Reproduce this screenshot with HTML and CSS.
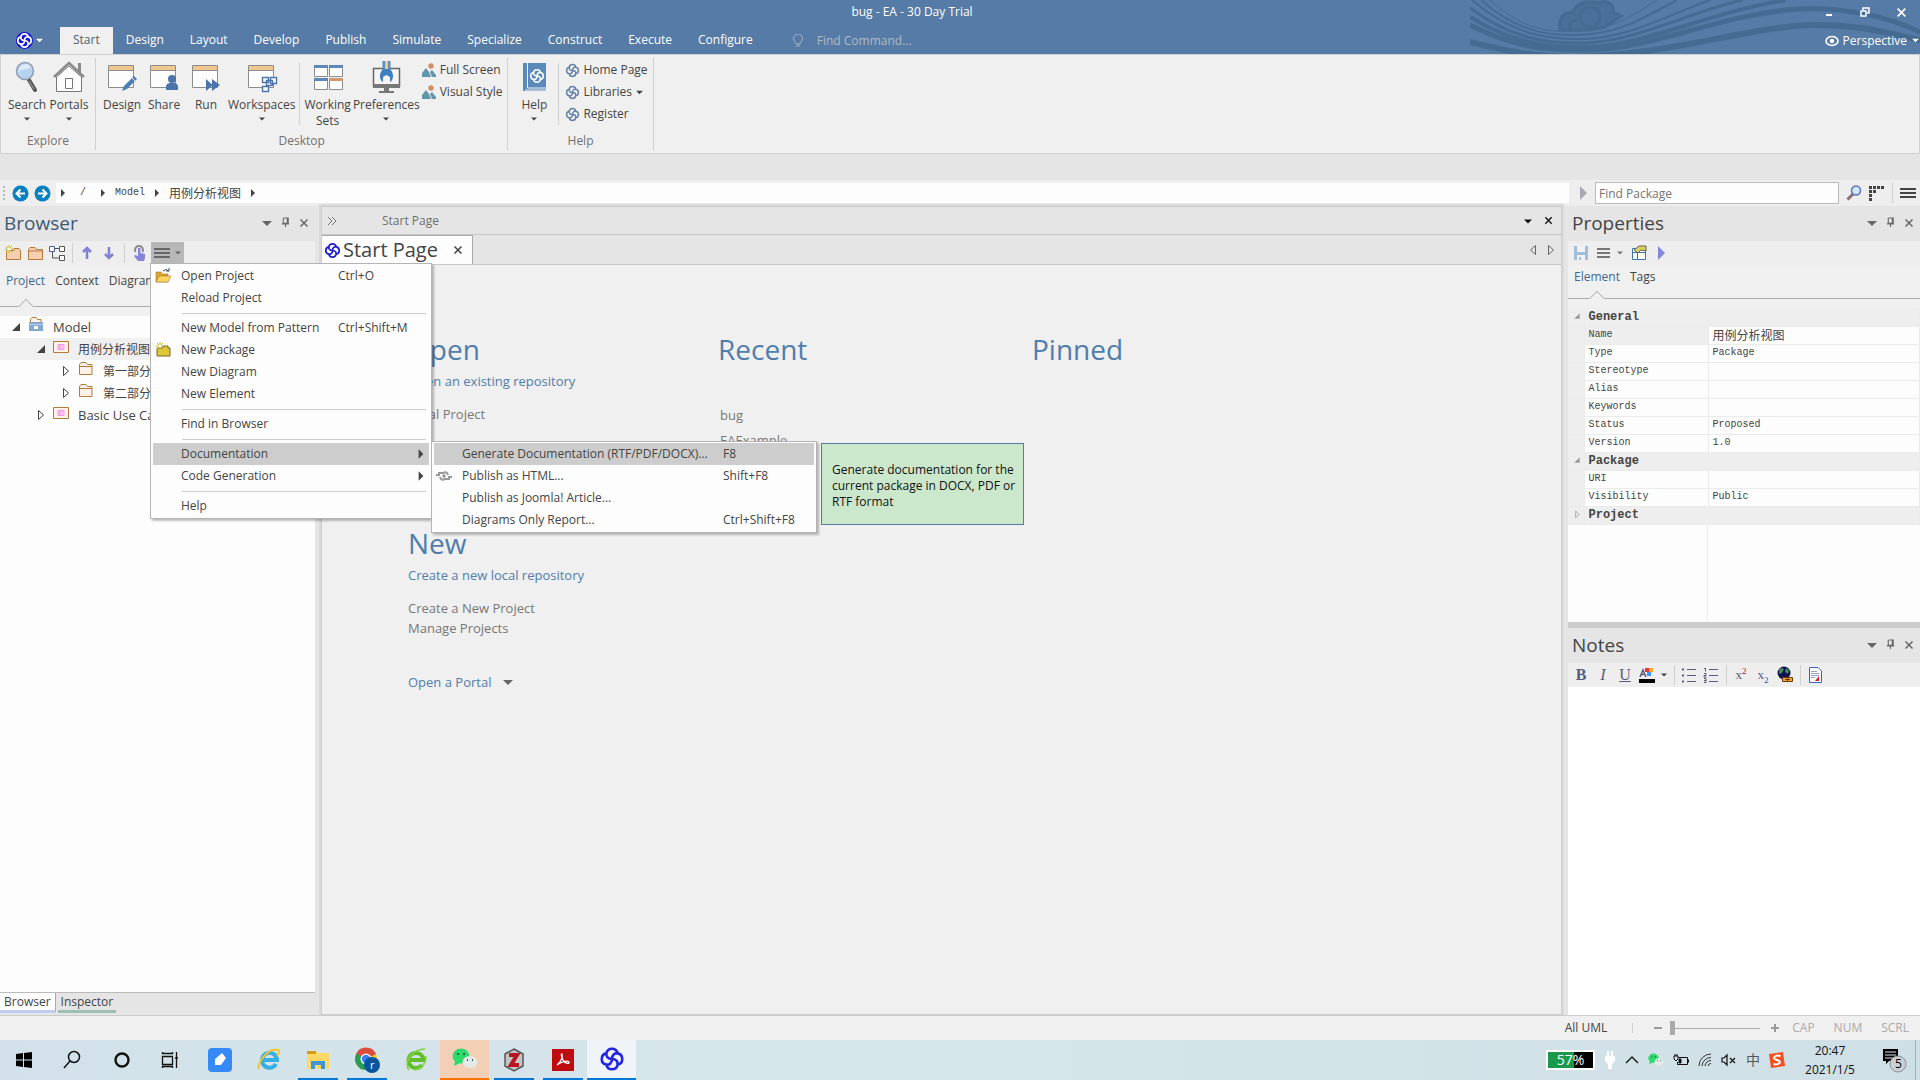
FILE: index.html
```html
<!DOCTYPE html>
<html lang="en">
<head>
  <meta charset="UTF-8">
  <title>bug - EA - 30 Day Trial</title>
  <link rel="stylesheet" href="styles.css">
</head>
<body>
  <!-- shared icons -->
  <svg class="defs" width="0" height="0">
    <symbol id="logo" viewBox="0 0 24 24">
      <path class="logo-bg" d="M6.8 6.8A5.3 5.3 0 0 1 17.2 6.8A5.3 5.3 0 0 1 17.2 17.2A5.3 5.3 0 0 1 6.8 17.2A5.3 5.3 0 0 1 6.8 6.8Z" stroke="currentColor" stroke-width="2.4"/>
      <path d="M12 12C12 8 15 6 17.2 7M12 12C16 12 18 15 17 17.2M12 12C12 16 9 18 6.8 17M12 12C8 12 6 9 7 6.8" fill="none" stroke="currentColor" stroke-width="2.4"/>
    </symbol>
    <symbol id="caret" viewBox="0 0 8 8"><path d="M1 2.500H7L4 5.500Z" fill="currentColor"/></symbol>
    <symbol id="bigcaret" viewBox="0 0 10 10"><path d="M0 3H10L5 8Z" fill="currentColor"/></symbol>
    <symbol id="right" viewBox="0 0 8 10"><path d="M2 1V9L6 5Z" fill="currentColor"/></symbol>
    <symbol id="pin" viewBox="0 0 10 12"><path d="M3 1H8V7H2.500V1M7 1V7M1 7.500H9M5 7.500V11" fill="none" stroke="currentColor" stroke-width="1.200"/></symbol>
    <symbol id="close" viewBox="0 0 10 10"><path d="M1.500 1.500L8.500 8.500M8.500 1.500L1.500 8.500" stroke="currentColor" stroke-width="1.500"/></symbol>
    <symbol id="lines" viewBox="0 0 16 12"><path d="M0 2H16M0 6H16M0 10H16" stroke="currentColor" stroke-width="2"/></symbol>
    <symbol id="window" viewBox="0 0 32 32"><path d="M2.500 4.500H27.500V26.500H2.500Z" fill="#fdfdfd" stroke="#8c8c8c"/><path d="M3 5H27V9H3Z" fill="#f0c78f"/><path d="M2 9.500H28" stroke="#8c8c8c"/></symbol>
    <symbol id="picture" viewBox="0 0 16 16"><circle cx="10" cy="4" r="2.700" fill="#d18d63"/><path d="M1 15V11L5 6L8 10L10 15ZM9 10L11 8L15 13V15H11Z" fill="#6296ab"/></symbol>
    <symbol id="opened" viewBox="0 0 12 12"><path d="M10 2V10H2Z" fill="currentColor"/></symbol>
    <symbol id="closed" viewBox="0 0 12 12"><path d="M3.500 1.500L8.500 6L3.500 10.500Z" fill="none" stroke="currentColor"/></symbol>
    <symbol id="folder" viewBox="0 0 16 16"><path d="M1.500 13.500V3.500L3 1.500H8L9.500 3.500H14V13.500ZM1.500 5.500H14" fill="#fdf1e8" stroke="#b5793c"/></symbol>
    <symbol id="view" viewBox="0 0 16 16"><path d="M.5 2.500H15.500V13.500H.5Z" fill="#fdf1e8" stroke="#b5793c"/><path d="M5 5.500H11V10.500H5ZM7 6V10" fill="#f9c6ec" stroke="#f29ae6"/></symbol>
    <symbol id="wechat" viewBox="0 0 26 22"><ellipse cx="9" cy="8" rx="8.500" ry="7.500" fill="#2ddb6c"/><path d="M3 13L2 18L8 15Z" fill="#2ddb6c"/><ellipse cx="18" cy="14" rx="7.500" ry="6" fill="#e4e8e6"/><path d="M20 18L23 21L23 17Z" fill="#e4e8e6"/><path d="M5 6H7M11 6H13M15 12H16M20 12H21" stroke="#236b43" stroke-width="2"/></symbol>
  </svg>

  <header class="titlebar">
    <svg class="waves" width="450" height="54" viewBox="0 0 450 54" fill="none" stroke="#456b92">
      <path d="M20 0C50 28 75 32 102 31C145 30 165 14 187 0" stroke-width="1"/>
      <path d="M11 0C45 30 75 36 108 35C152 34 180 14 207 0" stroke-width="2"/>
      <path d="M2 0C40 33 75 40 112 39C160 38 200 14 240 0" stroke-width="2"/>
      <path d="M0 8C40 38 75 44 116 43C166 41 220 12 272 0" stroke-width="3"/>
      <path d="M0 17C40 42 75 48 118 47C176 45 240 12 316 0" stroke-width="4"/>
      <path d="M0 25C40 46 75 51 120 50C186 48 250 14 330 9C380 7 420 18 450 32" stroke-width="5"/>
      <path d="M0 42C40 52 60 56 100 57C200 56 270 28 340 25C390 24 420 34 450 40" stroke-width="6"/>
      <path d="M90 30C88 18 94 11 103 13C105 3 117 0 128 3C140 -2 145 8 143 12L151 16L135 27L119 30Z" fill="#4a6f98" stroke-width="3"/>
      <circle cx="120" cy="17" r="10" stroke-width="3"/><path d="M100 30C99 22 103 20 107 21" stroke-width="3"/>
    </svg>
    <div class="title-row">
      <span class="title-side"></span>
      <h1>bug - EA - 30 Day Trial</h1>
      <div class="title-side window-btns">
        <button aria-label="Minimize"><svg width="10" height="10"><path d="M2 8H8" stroke="#fff" stroke-width="2"/></svg></button>
        <button aria-label="Restore"><svg width="10" height="10" fill="none" stroke="#fff" stroke-width="1.500"><path d="M1 4H6V9H1ZM3 3V1H9V6H7"/></svg></button>
        <button aria-label="Close"><svg width="11" height="11"><use href="#close"/></svg></button>
      </div>
    </div>
    <nav class="ribbon-tabs">
      <button class="app-menu" aria-label="Application menu"><svg class="logo-round" width="17" height="17"><use href="#logo"/></svg><svg width="9" height="9"><use href="#caret"/></svg></button>
      <button class="tab active">Start</button>
      <button class="tab">Design</button>
      <button class="tab">Layout</button>
      <button class="tab">Develop</button>
      <button class="tab">Publish</button>
      <button class="tab">Simulate</button>
      <button class="tab">Specialize</button>
      <button class="tab">Construct</button>
      <button class="tab">Execute</button>
      <button class="tab">Configure</button>
      <label class="find-command">
        <svg width="12" height="14" fill="none" stroke="#a9b6c4"><path d="M4 10C4 8 1.500 7 1.500 4.500A4 4 0 0 1 10.500 4.500C10.500 7 8 8 8 10ZM4 12H8"/></svg>
        <input type="text" placeholder="Find Command..." aria-label="Find Command">
      </label>
      <button class="perspective"><svg width="14" height="12"><ellipse cx="7" cy="6" rx="6" ry="4.500" fill="none" stroke="#fff" stroke-width="1.600"/><circle cx="7" cy="6" r="2.200" fill="#fff"/></svg>Perspective<svg width="9" height="9"><use href="#caret"/></svg></button>
    </nav>
  </header>

  <section class="ribbon">
    <div class="group">
      <div class="group-items">
        <button class="big">
          <svg width="32" height="32"><path d="M18 19L24 29" stroke="#555" stroke-width="4" stroke-linecap="round"/><path d="M18 20L23 28" stroke="#aaa" stroke-width="1"/><circle cx="14" cy="10" r="8.500" fill="#b5d2f0" stroke="#8d9cad" stroke-width="1.500"/><path d="M7 12C10 6 14 11 20 6C17 1 8 2 7 12Z" fill="#dcebfa"/></svg>
          Search<svg width="8" height="8"><use href="#caret"/></svg>
        </button>
        <button class="big">
          <svg width="32" height="32"><path d="M3.500 16L16 5L28.500 16V30.500H3.500Z" fill="#fdfdfd" stroke="#777"/><path d="M26.500 2V12" stroke="#8a8a8a" stroke-width="3"/><path d="M1 16L16 2L31 16" fill="none" stroke="#8a8a8a" stroke-width="2.500"/><path d="M12.500 17.500H19.500V27.500H12.500Z" fill="#fff" stroke="#777"/></svg>
          Portals<svg width="8" height="8"><use href="#caret"/></svg>
        </button>
      </div>
      <div class="group-name">Explore</div>
    </div>
    <div class="group">
      <div class="group-items">
        <button class="big"><svg width="32" height="32"><use href="#window"/><path d="M16 30L18 25L28 15L31 18L21 28Z" fill="#4c7db8"/><path d="M26 17L29 20" stroke="#f0f0f0"/></svg>Design</button>
        <button class="big"><svg width="32" height="32"><use href="#window"/><circle cx="24" cy="18" r="4" fill="#4b74ab"/><path d="M18 29V25Q19 22 22 22H26Q29 22 30 25V29Z" fill="#4b74ab"/></svg>Share</button>
        <button class="big"><svg width="32" height="32"><use href="#window"/><path d="M16 18L22 23.500V18L30 24L22 30V25L16 30Z" fill="#4b74ab"/></svg>Run</button>
        <button class="big"><svg width="32" height="32"><use href="#window"/><path d="M16.500 16.500H22.500V21.500H16.500ZM24.500 16.500H30.500V22.500H24.500ZM16.500 25.500H22.500V30.500H16.500ZM20.500 19.500H26.500V24.500H20.500Z" fill="#fff" stroke="#4b74ab" stroke-width="1.400"/></svg>Workspaces<svg width="8" height="8"><use href="#caret"/></svg></button>
        <span class="rule"></span>
        <button class="big"><svg width="32" height="32"><path d="M2.500 5.500H15.500V15.500H2.500ZM17.500 5.500H30.500V15.500H17.500ZM2.500 18.500H15.500V28.500H2.500ZM17.500 18.500H30.500V28.500H17.500Z" fill="#fdfdfd" stroke="#8c8c8c"/><path d="M2 5.500H16M17 5.500H31M2 18.500H16" stroke="#5b88b9" stroke-width="3"/><path d="M17 18.500H31" stroke="#d1966a" stroke-width="3"/></svg>Working<br>Sets</button>
        <button class="big"><svg width="32" height="32"><path d="M3.500 7.500H29.500V25H3.500Z" fill="#f5f5f5" stroke="#666" stroke-width="1.500"/><path d="M3 23H30V27H3ZM14 27H19V30H24V32H9V30H14Z" fill="#777"/><path d="M12.500 0H20.500V9H12.500Z" fill="#5e8dc0"/><path d="M15 0H18V11H15Z" fill="#f0c78f"/><path d="M13 8H20C25 13 23 20 20 21V16L16.500 14L13 16V21C10 20 8 13 13 8Z" fill="#3f7fc0"/></svg>Preferences<svg width="8" height="8"><use href="#caret"/></svg></button>
        <div class="small-list">
          <button><svg width="16" height="16"><use href="#picture"/></svg>Full Screen</button>
          <button><svg width="16" height="16"><use href="#picture"/></svg>Visual Style</button>
        </div>
      </div>
      <div class="group-name">Desktop</div>
    </div>
    <div class="group">
      <div class="group-items">
        <button class="big"><svg class="help-book" width="32" height="32"><path d="M5 2H28V30H5Z" fill="#5b8aba"/><path d="M9.500 2V27H28M7 29H28" stroke="#f0f0f0" fill="none"/><use href="#logo" x="11" y="7" width="16" height="16"/></svg>Help<svg width="8" height="8"><use href="#caret"/></svg></button>
        <span class="rule"></span>
        <div class="small-list ea">
          <button><svg width="15" height="15"><use href="#logo"/></svg>Home Page</button>
          <button><svg width="15" height="15"><use href="#logo"/></svg>Libraries<svg width="9" height="9"><use href="#caret"/></svg></button>
          <button><svg width="15" height="15"><use href="#logo"/></svg>Register</button>
        </div>
      </div>
      <div class="group-name">Help</div>
    </div>
  </section>

  <div class="navbar">
    <svg width="4" height="16" fill="#bbb"><path d="M0 1H2V3H0ZM0 5H2V7H0ZM0 9H2V11H0ZM0 13H2V15H0Z"/></svg>
    <button aria-label="Back"><svg width="17" height="17"><circle cx="8.500" cy="8.500" r="8" fill="#0a80c0"/><path d="M13 8.500H5M8.500 4.500L4.500 8.500L8.500 12.500" fill="none" stroke="#fff" stroke-width="2"/></svg></button>
    <button aria-label="Forward"><svg width="17" height="17"><circle cx="8.500" cy="8.500" r="8" fill="#0a80c0"/><path d="M4 8.500H12M8.500 4.500L12.500 8.500L8.500 12.500" fill="none" stroke="#fff" stroke-width="2"/></svg></button>
    <nav class="crumbs">
      <svg width="8" height="10"><use href="#right"/></svg>
      <a href="#" class="root">/</a>
      <svg width="8" height="10"><use href="#right"/></svg>
      <a href="#">Model</a>
      <svg width="8" height="10"><use href="#right"/></svg>
      <a href="#" class="cjk">用例分析视图</a>
      <svg width="8" height="10"><use href="#right"/></svg>
    </nav>
    <div class="find">
      <svg width="8" height="14"><path d="M0 0L7 7L0 14Z" fill="#a9a9b3"/></svg>
      <input type="text" placeholder="Find Package" aria-label="Find Package">
      <button aria-label="Search"><svg width="16" height="16"><path d="M1.500 14.500L7 9" stroke="#8b6f77" stroke-width="3"/><circle cx="10" cy="5.500" r="4.500" fill="#cfe6fb" stroke="#5b6fc0" stroke-width="1.500"/></svg></button>
      <button aria-label="Layout"><svg width="16" height="16" fill="#444"><path d="M0 1h3v3H0zM4 1h3v3H4zM8 1h3v3H8zM12 1h3v3h-3zM0 5h3v3H0zM4 5h3v3H4zM0 9h3v3H0zM0 13h3v3H0z"/></svg></button>
      <span class="rule"></span>
      <button aria-label="Menu"><svg width="16" height="12"><use href="#lines"/></svg></button>
    </div>
  </div>

  <main class="workspace">
    <aside class="panel browser">
      <div class="panel-title">
        <h2>Browser</h2>
        <button aria-label="Menu"><svg width="10" height="10"><use href="#bigcaret"/></svg></button>
        <button aria-label="Pin"><svg width="9" height="11"><use href="#pin"/></svg></button>
        <button aria-label="Close"><svg width="10" height="10"><use href="#close"/></svg></button>
      </div>
      <div class="toolbar">
        <button class="tool" aria-label="New model"><svg width="16" height="16"><path d="M1.500 14.500V5.500H9V3.500H14L15.500 5.500V14.500Z" fill="#f6cfae" stroke="#b5793c"/><path d="M4 0V8M0 4H8M1 1L7 7M7 1L1 7" stroke="#cdb71a"/><circle cx="4" cy="4" r="1.500" fill="#fff"/></svg></button>
        <button class="tool" aria-label="New package"><svg width="16" height="16"><path d="M1.500 14.500V4.500L3 2.500H8L9.500 4.500H15.500V14.500ZM1.500 6H15" fill="#f6cfae" stroke="#b5793c"/></svg></button>
        <button class="tool" aria-label="New diagram"><svg width="16" height="16" fill="#fff" stroke="#555"><path d="M3.500 5V13H10M5 3.500H10" fill="none"/><path d="M.5 1.500H5.500V6.500H.5Z" stroke="#4c5fa8"/><path d="M10.500 1.500H15.500V6.500H10.500ZM10.500 10.500H15.500V15.500H10.500Z"/></svg></button>
        <span class="rule"></span>
        <button class="tool" aria-label="Move up"><svg width="16" height="16"><path d="M8 14V4M4 7L8 3L12 7" fill="none" stroke="#8080d8" stroke-width="2.500"/></svg></button>
        <button class="tool" aria-label="Move down"><svg width="16" height="16"><path d="M8 2V12M4 9L8 13L12 9" fill="none" stroke="#8080d8" stroke-width="2.500"/></svg></button>
        <span class="rule"></span>
        <button class="tool" aria-label="Locate"><svg width="16" height="16"><path d="M4.500 7A4 4 0 1 1 11.500 7" fill="none" stroke="#888" stroke-width="2"/><path d="M7 3H9.500V8L14 9V13L13 16H7L3 11L4 10L7 11Z" fill="#8585dc"/></svg></button>
        <div class="menu-anchor">
          <button class="menu-btn" aria-label="Browser menu"><svg width="16" height="12"><use href="#lines"/></svg><svg width="8" height="8"><use href="#caret"/></svg></button>
          <ul class="menu main-menu">
            <li><button><svg width="16" height="16"><path d="M1 14V4H6L7 6H13V14Z" fill="#e0a530" stroke="#8a6a20" stroke-width=".5"/><path d="M1 14L4 8H16L13 14Z" fill="#ffd45e" stroke="#8a6a20" stroke-width=".5"/><path d="M8 3Q11 0 14 3M14 0V3H11" fill="none" stroke="#456"/></svg><span>Open Project</span><kbd>Ctrl+O</kbd></button></li>
            <li><button><span>Reload Project</span></button></li>
            <li class="sep"></li>
            <li><button><span>New Model from Pattern</span><kbd>Ctrl+Shift+M</kbd></button></li>
            <li><button><svg width="16" height="16"><path d="M2 14V6H8V4H13V6H15V14Z" fill="#e0c63a" stroke="#776a22"/><path d="M5 0V8M1 4H9M2 1L8 7M8 1L2 7" stroke="#c9b21a"/><circle cx="5" cy="4" r="1.500" fill="#fff"/></svg><span>New Package</span></button></li>
            <li><button><span>New Diagram</span></button></li>
            <li><button><span>New Element</span></button></li>
            <li class="sep"></li>
            <li><button><span>Find in Browser</span></button></li>
            <li class="sep"></li>
            <li class="has-sub">
              <button class="hot"><span>Documentation</span><svg class="more" width="10" height="12"><use href="#right"/></svg></button>
              <ul class="menu sub-menu">
                <li><button class="hot"><span>Generate Documentation (RTF/PDF/DOCX)...</span><kbd>F8</kbd></button></li>
                <li><button><svg width="16" height="16" fill="none" stroke="#999" stroke-width="2"><path d="M2 5H7Q11 3 12 7M14 11H9Q5 13 4 9M0 7H4M12 9H16"/><circle cx="8" cy="8" r="1.800" fill="#999" stroke="none"/></svg><span>Publish as HTML...</span><kbd>Shift+F8</kbd></button></li>
                <li><button><span>Publish as Joomla! Article...</span></button></li>
                <li><button><span>Diagrams Only Report...</span><kbd>Ctrl+Shift+F8</kbd></button></li>
              </ul>
              <div class="tooltip">Generate documentation for the current package in DOCX, PDF or RTF format</div>
            </li>
            <li><button><span>Code Generation</span><svg class="more" width="10" height="12"><use href="#right"/></svg></button></li>
            <li class="sep"></li>
            <li><button><span>Help</span></button></li>
          </ul>
        </div>
      </div>
      <nav class="panel-tabs tall">
        <button class="on">Project</button><button>Context</button><button>Diagram</button>
      </nav>
      <ul class="tree">
        <li class="l0"><svg width="12" height="12"><use href="#opened"/></svg><svg width="16" height="16"><path d="M2.500 5V2.500L4 .5H8L9.500 2.500H13V5" fill="#fdf1e8" stroke="#b5793c"/><path d="M1 5H15V14H1Z" fill="#84a9d1"/><path d="M1 7.500H15" stroke="#b9d0e8"/><path d="M6 9H10V12H6Z" fill="#fff"/></svg>Model</li>
        <li class="l1 selected"><svg width="12" height="12"><use href="#opened"/></svg><svg width="16" height="16"><use href="#view"/></svg><span class="cjk">用例分析视图</span></li>
        <li class="l2"><svg width="12" height="12"><use href="#closed"/></svg><svg width="16" height="16"><use href="#folder"/></svg><span class="cjk">第一部分</span></li>
        <li class="l2"><svg width="12" height="12"><use href="#closed"/></svg><svg width="16" height="16"><use href="#folder"/></svg><span class="cjk">第二部分</span></li>
        <li class="l1"><svg width="12" height="12"><use href="#closed"/></svg><svg width="16" height="16"><use href="#view"/></svg>Basic Use Case</li>
      </ul>
      <div class="dock-tabs">
        <button class="on">Browser</button><button>Inspector</button>
      </div>
    </aside>

    <section class="center">
      <div class="strip caption">
        <svg width="10" height="12" fill="none" stroke="#777"><path d="M1 2L5 6L1 10M5 2L9 6L5 10"/></svg>
        <span>Start Page</span>
        <button aria-label="Tab list"><svg width="8" height="8"><use href="#bigcaret"/></svg></button>
        <button aria-label="Close"><svg width="9" height="9"><use href="#close"/></svg></button>
      </div>
      <div class="strip doc-tabs">
        <button class="doc-tab"><svg width="17" height="17"><use href="#logo"/></svg>Start Page<svg class="x" width="10" height="10"><use href="#close"/></svg></button>
        <button class="arrow" aria-label="Previous"><svg width="8" height="12"><path d="M6.500 1.500L1.500 6L6.500 10.500Z" fill="none" stroke="#666"/></svg></button>
        <button class="arrow" aria-label="Next"><svg width="8" height="12"><path d="M1.500 1.500L6.500 6L1.500 10.500Z" fill="none" stroke="#666"/></svg></button>
      </div>
      <div class="start">
        <div class="col">
          <h2>Open</h2>
          <a class="lead" href="#">Open an existing repository</a>
          <a href="#">Local Project</a>
          <h2 class="new">New</h2>
          <a class="lead" href="#">Create a new local repository</a>
          <a href="#">Create a New Project</a>
          <a href="#">Manage Projects</a>
          <button class="portal">Open a Portal<svg width="10" height="10"><use href="#bigcaret"/></svg></button>
        </div>
        <div class="col recent">
          <h2>Recent</h2>
          <a href="#">bug</a>
          <a href="#">EAExample</a>
        </div>
        <div class="col">
          <h2>Pinned</h2>
        </div>
      </div>
    </section>

    <aside class="side">
      <section class="panel properties">
        <div class="panel-title">
          <h2>Properties</h2>
          <button aria-label="Menu"><svg width="10" height="10"><use href="#bigcaret"/></svg></button>
          <button aria-label="Pin"><svg width="9" height="11"><use href="#pin"/></svg></button>
          <button aria-label="Close"><svg width="10" height="10"><use href="#close"/></svg></button>
        </div>
        <div class="toolbar">
          <button class="tool" aria-label="Save"><svg width="16" height="16"><path d="M1 1H15V15H1Z" fill="#a3bdd9"/><path d="M4 1H12V7H4ZM4 10H12V15H4Z" fill="#f0f2f5"/><path d="M7 12V15" stroke="#a3bdd9" stroke-width="2"/></svg></button>
          <button class="tool wide" aria-label="Options"><svg width="13" height="12"><path d="M0 2H13M0 6H13M0 10H13" stroke="#777" stroke-width="2"/></svg><svg width="8" height="8"><use href="#caret"/></svg></button>
          <button class="tool" aria-label="Properties"><svg width="16" height="16"><path d="M1.500 3.500H14.500V14.500H1.500ZM1.500 7.500H14.500M6.500 4V14" fill="#fff" stroke="#3f74ab"/><path d="M3 5L8 1H15V6L10 5L7 8Z" fill="#d9cf66" stroke="#665"/></svg></button>
          <button class="tool" aria-label="Run"><svg width="16" height="16"><path d="M5 1L12 8L5 15Z" fill="#8585dc"/></svg></button>
        </div>
        <nav class="panel-tabs">
          <button class="on">Element</button><button>Tags</button>
        </nav>
        <table class="grid">
          <colgroup><col class="gutter"><col class="name"><col></colgroup>
          <tr class="head"><td><svg width="8" height="8"><use href="#opened"/></svg></td><th colspan="2">General</th></tr>
          <tr class="current"><td></td><th>Name</th><td class="cjk">用例分析视图</td></tr>
          <tr><td></td><th>Type</th><td>Package</td></tr>
          <tr><td></td><th>Stereotype</th><td></td></tr>
          <tr><td></td><th>Alias</th><td></td></tr>
          <tr><td></td><th>Keywords</th><td></td></tr>
          <tr><td></td><th>Status</th><td>Proposed</td></tr>
          <tr><td></td><th>Version</th><td>1.0</td></tr>
          <tr class="head"><td><svg width="8" height="8"><use href="#opened"/></svg></td><th colspan="2">Package</th></tr>
          <tr><td></td><th>URI</th><td></td></tr>
          <tr><td></td><th>Visibility</th><td>Public</td></tr>
          <tr class="head"><td><svg width="9" height="9"><use href="#closed"/></svg></td><th colspan="2">Project</th></tr>
        </table>
        <div class="grid-rest"><span></span></div>
      </section>
      <section class="panel notes">
        <div class="panel-title">
          <h2>Notes</h2>
          <button aria-label="Menu"><svg width="10" height="10"><use href="#bigcaret"/></svg></button>
          <button aria-label="Pin"><svg width="9" height="11"><use href="#pin"/></svg></button>
          <button aria-label="Close"><svg width="10" height="10"><use href="#close"/></svg></button>
        </div>
        <div class="toolbar">
          <button class="tool letter"><b>B</b></button>
          <button class="tool letter"><i>I</i></button>
          <button class="tool letter"><u>U</u></button>
          <button class="tool" aria-label="Text colour"><svg width="16" height="16"><path d="M1 10L4 3L7 10M2.500 7.500H5.500" fill="none" stroke="#5a5a80" stroke-width="1.500"/><path d="M6 1H10V5H6Z" fill="#e33"/><path d="M10 1H14V5H10Z" fill="#fa3"/><path d="M8 5H12V9H8Z" fill="#39f"/><path d="M0 12H16V16H0Z"/></svg></button>
          <button class="tool narrow" aria-label="Colours"><svg width="8" height="8"><use href="#caret"/></svg></button>
          <span class="rule"></span>
          <button class="tool" aria-label="Bullets"><svg width="16" height="16" stroke="#5a5a80"><path d="M1 2.500H3M1 8.500H3M1 14.500H3" stroke-width="2"/><path d="M6 2.500H15M6 8.500H15M6 14.500H15"/></svg></button>
          <button class="tool" aria-label="Numbering"><svg width="16" height="16" fill="none" stroke="#5a5a80"><path d="M6 2.500H15M6 8.500H15M6 14.500H15M1 1.500H2.500V4.500M1 6.500H3V8.500H1V10H3.500M1 11.500H3V15.500H1M1 13.500H3"/></svg></button>
          <span class="rule"></span>
          <button class="tool script">x<sup>2</sup></button>
          <button class="tool script">x<sub>2</sub></button>
          <button class="tool" aria-label="Hyperlink"><svg width="18" height="18"><circle cx="8" cy="7" r="6.500" fill="#12124f"/><path d="M3 3Q6 1 8 3L6 7L3 8ZM10 2L13 4L12 8L9 6Z" fill="#3f8a63"/><path d="M6.500 11.500H11.500V15.500H6.500ZM11.500 11.500H16.500V15.500H11.500Z" fill="#f3a536" stroke="#6b3c10"/><path d="M9 13.500H14" stroke="#6b3c10"/></svg></button>
          <span class="rule"></span>
          <button class="tool" aria-label="Glossary"><svg width="16" height="16"><path d="M2.500 .5H11L14.500 4V15.500H2.500Z" fill="#fff" stroke="#3f5fc4"/><path d="M4 4.500H10M4 6.500H12M4 8.500H12M4 10.500H8" stroke="#9aa2c4"/><path d="M8 14L12 9V14Z" fill="#c22"/></svg></button>
        </div>
        <textarea aria-label="Notes"></textarea>
      </section>
    </aside>
  </main>

  <footer class="statusbar">
    <span class="uml">All UML</span>
    <span class="rule"></span>
    <svg width="10" height="10"><path d="M1 5H9" stroke="#999" stroke-width="2"/></svg>
    <input type="range" min="0" max="100" value="0" aria-label="Zoom">
    <svg width="10" height="10"><path d="M1 5H9M5 1V9" stroke="#999" stroke-width="2"/></svg>
    <span class="key">CAP</span><span class="key">NUM</span><span class="key">SCRL</span>
  </footer>

  <div class="taskbar">
    <button aria-label="Start"><svg width="24" height="24"><path d="M4 6L11 5V11.500H4ZM12 5L20 4V11.500H12ZM4 12.500H11V19L4 18ZM12 12.500H20V20L12 19Z"/></svg></button>
    <button aria-label="Search"><svg width="24" height="24" fill="none" stroke="#111" stroke-width="1.500"><circle cx="13" cy="9" r="5.500"/><path d="M9 13L3 20"/></svg></button>
    <button aria-label="Cortana"><svg width="24" height="24"><circle cx="12" cy="12" r="6.500" fill="none" stroke="#111" stroke-width="2.400"/></svg></button>
    <button aria-label="Task view"><svg width="24" height="24" fill="none" stroke="#111" stroke-width="1.300"><path d="M3.500 8.500H13.500V16.500H3.500ZM3.500 4V5.500H13.500V4M3.500 20V18.500H13.500V20M17.500 4V20M16 10H19"/></svg></button>
    <button aria-label="Notes app"><svg width="24" height="24"><rect width="24" height="24" rx="4" fill="#358af8"/><path d="M7 17V11L14 5L18 10L13 17Z" fill="#fff"/></svg></button>
    <button aria-label="Internet Explorer"><svg width="24" height="24" fill="none"><path d="M19 16A7.500 7.500 0 1 1 20 12H6" stroke="#35aee2" stroke-width="4"/><path d="M2 21C-1 15 12 -1 21 2C23 3 21 7 20 8" stroke="#f3c52c" stroke-width="2"/></svg></button>
    <button class="run" aria-label="File Explorer"><svg width="24" height="24"><path d="M1 3H10L12 5H23V21H1Z" fill="#ffd867"/><path d="M1 3H10V6H1Z" fill="#d89b1b"/><path d="M5 21V13H19V21H15V17H9V21Z" fill="#3f95d5"/></svg></button>
    <button class="run" aria-label="Chrome"><svg width="26" height="26"><circle cx="12" cy="12" r="11" fill="#f5c731"/><path d="M12 12L2 7A11 11 0 0 1 22 7Z" fill="#dc4b3e"/><path d="M12 12L2.500 6.500A11 11 0 0 0 11 23Z" fill="#2b9c55"/><circle cx="12" cy="12" r="5.500" fill="#fff"/><circle cx="12" cy="12" r="4.200" fill="#3c7cf0"/><circle cx="18" cy="18" r="8" fill="#06569c"/><text x="16" y="22" font-size="11" fill="#fff">r</text></svg></button>
    <button aria-label="Browser"><svg width="24" height="24" fill="none"><path d="M18 17A7.500 7.500 0 1 1 19.500 12H6" stroke="#63be2b" stroke-width="4"/><path d="M5 22C-1 14 9 1 21 1M10 22C18 21 22 15 22 8" stroke="#82d143" stroke-width="1.500"/></svg></button>
    <button class="run alert" aria-label="WeChat"><svg width="26" height="22"><use href="#wechat"/></svg></button>
    <button class="run" aria-label="Zotero"><svg width="24" height="24"><path d="M12 1L21 6V18L12 23L3 18V6Z" fill="#c4c4c4" stroke="#555" stroke-width="1.500"/><path d="M7 7H15L9 17H17" fill="none" stroke="#b81422" stroke-width="4"/></svg></button>
    <button class="run" aria-label="Acrobat"><svg width="24" height="24"><path d="M1 1H23V23H1Z" fill="#bd0b0f"/><path d="M6 17C10 14 12 9 11 6C10 5 10 8 12 12C14 16 19 16 18 14C16 12 10 14 6 17Z" fill="none" stroke="#fff" stroke-width="1.300"/></svg></button>
    <button class="run current" aria-label="Enterprise Architect"><svg width="26" height="26"><use href="#logo"/></svg></button>
    <div class="tray">
      <span class="battery">57%</span>
      <svg width="12" height="18"><path d="M3 0H5V5H7V0H9V5H11V10L8 13V18H4V13L1 10V5H3Z" fill="#fff"/></svg>
      <svg width="14" height="10"><path d="M1 8L7 2L13 8" fill="none" stroke="#222" stroke-width="1.500"/></svg>
      <svg width="16" height="14"><use href="#wechat"/></svg>
      <svg width="16" height="14" fill="none" stroke="#111"><path d="M5.500 4.500H14.500V11.500H4.500V9M15.500 6.500V9.500M1 3H5V6L3 8L1 6ZM2 1V3M4 1V3"/><path d="M6 6H8V10H6Z" fill="#111"/></svg>
      <svg width="14" height="14" fill="none" stroke="#333"><path d="M1 13A12 12 0 0 1 13 1M4 13A9 9 0 0 1 13 4.500M7 13A6 6 0 0 1 13 7.500M10 13A3 3 0 0 1 13 10.500"/></svg>
      <svg width="16" height="14" fill="none" stroke="#111" stroke-width="1.200"><path d="M1 5H3L6 2V12L3 9H1ZM9 5L14 10M14 5L9 10"/></svg>
      <span class="ime">中</span>
      <svg width="16" height="16"><path d="M0 2L14 0L16 14L2 16Z" fill="#f4511e"/><path d="M11.500 4C8 3 5 4 5 6C5 8 11 8 11 10C11 12 7 13 4.500 12" fill="none" stroke="#fff" stroke-width="2"/></svg>
      <div class="clock"><span>20:47</span><span>2021/1/5</span></div>
      <button class="action" aria-label="Notifications"><svg width="26" height="26"><path d="M1 2H16V14H7L4 17V14H1Z"/><path d="M3 5H14M3 8H14M3 11H11" stroke="#dce6ea"/><circle cx="16" cy="17" r="8" fill="#c9cfd2" stroke="#8d9396"/><text x="13" y="21" font-size="12">5</text></svg></button>
    </div>
  </div>
</body>
</html>
```
FILE: styles.css
```css
* {
  box-sizing: border-box;
}

body {
  margin: 0;
  height: 100vh;
  display: flex;
  flex-direction: column;
  overflow: hidden;
  background: #e5e5e5;
  color: #444;
  font-family: "Open Sans", "Noto Sans CJK SC", sans-serif;
  font-size: 12px;
  line-height: 16px;
}

button, input, textarea {
  font: inherit;
  color: inherit;
  background: none;
  border: none;
  padding: 0;
  margin: 0;
}

button {
  display: flex;
  align-items: center;
  justify-content: center;
  white-space: nowrap;
}

a {
  color: inherit;
  text-decoration: none;
}

h1, h2 {
  margin: 0;
  font-weight: normal;
}

ul {
  margin: 0;
  padding: 0;
  list-style: none;
}

svg {
  flex: none;
}

.defs {
  position: absolute;
}

.logo-bg {
  fill: none;
}

.cjk {
  font-family: "Noto Sans CJK SC", sans-serif;
  font-size: 12px;
}

.rule {
  flex: none;
  width: 1px;
  background: #d0d0d0;
}

/* title bar */
.titlebar {
  position: relative;
  flex: none;
  background: #557ba6;
  color: #fff;
}

.waves {
  position: absolute;
  right: 0;
  top: 0;
}

.title-row, .ribbon-tabs {
  position: relative;
  display: flex;
}

.title-row {
  height: 27px;
  align-items: center;
  padding-bottom: 3px;
}

.title-row h1 {
  font-size: 12px;
}

.title-side {
  flex: 1;
}

.window-btns {
  display: flex;
  flex: 1 0 96px;
  justify-content: flex-end;
  gap: 26px;
  padding-right: 13px;
}

.ribbon-tabs {
  height: 27px;
}

.app-menu {
  width: 60px;
  gap: 2px;
}

.logo-round {
  color: #fff;
  background: #1414d8;
  border-radius: 50%;
}

.tab {
  padding: 0 13px 1px;
}

.tab.active {
  background: #f0f0f0;
  color: #4b5f78;
}

.find-command {
  display: flex;
  align-items: center;
  gap: 13px;
  margin-left: 26px;
}

.find-command input {
  width: 120px;
}

.find-command input::placeholder {
  color: #b3bac2;
}

.perspective {
  margin-left: auto;
  gap: 4px;
}

/* ribbon */
.ribbon {
  flex: none;
  display: flex;
  height: 100px;
  padding: 3px 0;
  background: #f0f0f0;
  border: 1px solid #d0d0d0;
}

.group {
  display: flex;
  flex-direction: column;
  justify-content: space-between;
  padding: 1px 5px 1px;
  border-right: 1px solid #d0d0d0;
}

.group-items {
  display: flex;
  align-items: flex-start;
}

.group-items .rule {
  height: 62px;
  margin: 4px 3px 0;
}

.big {
  flex-direction: column;
  min-width: 42px;
  padding: 2px 1px 0;
}

.big > svg:first-child {
  margin-bottom: 4px;
}

.big > svg:last-child:not(:first-child) {
  margin-top: 2px;
}

.help-book {
  color: #fff;
}

.group-name {
  text-align: center;
  color: #707070;
}

.small-list button {
  height: 22px;
  gap: 3px;
}

.ea {
  padding-left: 3px;
}

.ea svg:first-child {
  color: #6481a8;
}

/* navigation bar */
.navbar {
  flex: none;
  display: flex;
  align-items: center;
  gap: 5px;
  height: 26px;
  margin-top: 26px;
  padding: 0 4px 0 3px;
  background: #eee;
}

.navbar button {
  height: 22px;
}

.crumbs {
  flex: 1;
  display: flex;
  align-items: center;
  gap: 8px;
  height: 20px;
  padding-left: 3px;
  background: #fdfdfd;
  font-family: "Liberation Mono", monospace;
  font-size: 10px;
}

.root {
  width: 16px;
  text-align: center;
}

.find {
  display: flex;
  align-items: center;
  gap: 7px;
  width: 342px;
  padding-left: 6px;
}

.find input {
  flex: 1;
  min-width: 0;
  height: 22px;
  padding: 0 3px;
  background: #fdfdfd;
  border: 1px solid #bbb;
}

.find .rule {
  height: 20px;
}

.find-command input,
.find input {
  outline: none;
}

/* workspace */
.workspace {
  flex: 1;
  display: flex;
  min-height: 0;
}

.panel {
  display: flex;
  flex-direction: column;
}

.panel-title {
  flex: none;
  display: flex;
  align-items: center;
  gap: 9px;
  height: 35px;
  padding: 0 6px 2px 4px;
  background: #e5e5e5;
  color: #666;
}

.panel-title h2 {
  flex: 1;
  font-size: 19px;
  line-height: 24px;
  color: #444;
}

.browser .panel-title h2 {
  color: #3d5876;
}

.toolbar {
  flex: none;
  display: flex;
  align-items: center;
  height: 24px;
  padding-left: 2px;
  background: #eee;
}

.toolbar .rule {
  height: 20px;
  margin: 0 3px 0 4px;
}

.tool {
  width: 22px;
  height: 22px;
}

.tool.narrow {
  width: 12px;
}

.tool.wide {
  width: 36px;
  gap: 6px;
  color: #777;
}

.letter, .script {
  display: block;
  font-family: "Liberation Serif", serif;
  font-size: 16px;
  line-height: 20px;
  color: #5a5a80;
}

.script {
  font-size: 13px;
}

.script sup, .script sub {
  font-size: 9px;
  line-height: 1;
}

.script sup {
  color: #a01818;
}

.script sub {
  color: #3058c0;
}

.panel-tabs {
  flex: none;
  display: flex;
  align-items: flex-start;
  height: 43px;
  padding: 4px 0 0 6px;
  gap: 10px;
  background: linear-gradient(#aaa, #aaa) 0 33px / 100% 1px no-repeat #f0f0f0;
}

.panel-tabs button {
  position: relative;
}

.panel-tabs .on {
  color: #41678f;
}

/* notch of the active tab, sits on the rule */
.panel-tabs .on::after {
  content: "";
  position: absolute;
  left: 50%;
  top: 24px;
  width: 11px;
  height: 11px;
  margin-left: -6px;
  background: #f0f0f0;
  border: solid #aaa;
  border-width: 1px 0 0 1px;
  transform: rotate(45deg);
  clip-path: polygon(0 0, 100% 0, 0 100%);
}

.panel-tabs.tall {
  height: 51px;
  padding-top: 8px;
  background-position: 0 41px;
}

.panel-tabs.tall .on::after {
  top: 28px;
}

/* browser */
.browser {
  width: 315px;
}

.menu-anchor {
  position: relative;
  margin-left: 1px;
}

.menu-btn {
  width: 33px;
  height: 22px;
  gap: 4px;
  background: #b8b8b8;
  color: #666;
}

.tree {
  flex: 1;
  background: #fdfdfd;
  font-size: 13px;
}

.tree li {
  display: flex;
  align-items: center;
  height: 22px;
  padding-left: 10px;
}

.tree svg:first-child {
  margin-right: 6px;
}

.tree svg:nth-child(2) {
  margin: 0 9px 4px 0;
}

.tree .l1 {
  padding-left: 35px;
}

.tree .l2 {
  padding-left: 60px;
}

.tree .selected {
  background: #f0f0f0;
}

.dock-tabs {
  flex: none;
  display: flex;
  gap: 2px;
  height: 23px;
  border-top: 1px solid #bbb;
}

.dock-tabs button {
  height: 20px;
  padding: 0 3px;
  border-bottom: 3px solid #9bc0b3;
}

.dock-tabs .on {
  padding: 0 4px;
  background: #fdfdfd;
  border-right: 1px solid #aaa;
  border-bottom-color: #c0cdf0;
}

/* menus */
.menu {
  position: absolute;
  z-index: 10;
  padding: 1px 2px;
  background: #fdfdfd;
  border: 1px solid #b4b4b4;
  box-shadow: 2px 2px 2px rgba(0, 0, 0, 0.25);
}

.main-menu {
  left: -1px;
  top: 21px;
  width: 282px;
}

.menu li button {
  position: relative;
  justify-content: flex-start;
  width: 100%;
  height: 22px;
  padding-left: 28px;
}

.menu li svg:first-child {
  margin: 0 10px 0 -26px;
}

.menu .sep {
  height: 1px;
  margin: 4px 3px 3px 29px;
  background: #ccc;
}

.menu .hot {
  background: #cdcdcd;
}

.menu span {
  flex: 1;
  text-align: left;
}

.menu kbd {
  width: 91px;
  font: inherit;
  text-align: left;
}

.menu .more {
  margin-right: 3px;
}

.has-sub {
  position: relative;
}

.sub-menu {
  left: 278px;
  top: -2px;
  width: 386px;
}

.tooltip {
  position: absolute;
  z-index: 11;
  left: 668px;
  top: 0;
  width: 203px;
  padding: 18px 2px 14px 10px;
  background: #cbe8cd;
  border: 1px solid #557ba6;
  color: #111;
}

/* centre */
.center {
  flex: 1;
  display: flex;
  flex-direction: column;
  margin: 0 1px 0 6px;
  border: 1px solid #ccc;
  outline: 2px solid #dadada;
  background: #f0f0f0;
}

.strip {
  display: flex;
  align-items: center;
  background: #e5e5e5;
  border-bottom: 1px solid #c8c8c8;
}

.caption {
  height: 28px;
  padding: 0 8px 0 5px;
  gap: 12px;
}

.caption span {
  flex: 1;
  margin-left: 33px;
  color: #707070;
}

.caption button {
  color: #111;
}

.doc-tabs {
  height: 30px;
  padding-right: 6px;
  gap: 10px;
}

.doc-tab {
  height: 29px;
  margin-right: auto;
  padding: 0 9px 0 2px;
  gap: 2px;
  background: #fdfdfd;
  border: 1px solid #aaa;
  border-width: 1px 1px 0 0;
  font-size: 20px;
}

.doc-tab svg:first-child {
  color: #1c1cd0;
}

.doc-tab .x {
  margin-left: 13px;
}

.start {
  display: flex;
  padding: 66px 0 0 86px;
  font-size: 13px;
  line-height: 20px;
  color: #777;
}

.col {
  display: flex;
  flex-direction: column;
  align-items: flex-start;
  width: 314px;
}

.col:first-child {
  width: 310px;
}

.start h2 {
  font-size: 28px;
  line-height: 36px;
  color: #4f7dac;
}

.start .lead {
  margin: 4px 0 13px;
  color: #4f7dac;
}

.start .new {
  margin-top: 101px;
}

.recent h2 {
  margin-bottom: 38px;
}

.recent a {
  margin: 0 0 5px 2px;
}

.portal {
  margin-top: 34px;
  gap: 12px;
  color: #4f7dac;
}

.portal svg {
  color: #666;
}

/* right side */
.side {
  display: flex;
  flex-direction: column;
  width: 352px;
  margin-left: 5px;
}

.properties {
  height: 416px;
}

.grid {
  width: 100%;
  table-layout: fixed;
  border-collapse: collapse;
  background: #fdfdfd;
  font-family: "Liberation Mono", monospace;
  font-size: 10px;
}

.gutter {
  width: 16px;
}

.name {
  width: 124px;
}

.grid tr {
  height: 18px;
}

.grid td, .grid th {
  padding: 0 4px;
  border: 1px solid #ebebeb;
  border-width: 0 1px 1px 0;
  font-weight: normal;
  text-align: left;
  line-height: 16px;
}

.grid td:first-child {
  padding: 0 0 0 5px;
  background: #eee;
  color: #999;
  line-height: 8px;
}

.grid .head th {
  background: #eee;
  font-size: 12px;
  font-weight: bold;
}

.grid .current th {
  background: #eee;
}

.grid td.cjk {
  font-family: "Noto Sans CJK SC", sans-serif;
  font-size: 12px;
}

.grid-rest {
  flex: 1;
  display: flex;
  background: #fdfdfd;
}

.grid-rest span {
  width: 140px;
  border-right: 1px solid #ebebeb;
}

.notes {
  flex: 1;
  border-top: 6px solid #ccc;
}

.notes textarea {
  flex: 1;
  resize: none;
  background: #fff;
}

/* status bar */
.statusbar {
  flex: none;
  display: flex;
  align-items: center;
  justify-content: flex-end;
  height: 25px;
  padding-right: 11px;
  background: #f0f0f0;
  border-top: 1px solid #ccc;
}

.statusbar .rule {
  height: 10px;
  margin: 0 20px 0 25px;
}

.statusbar input {
  appearance: none;
  width: 90px;
  height: 14px;
  margin: 0 10px 0 7px;
  background: linear-gradient(#aaa, #aaa) 0 50% / 100% 1px no-repeat;
}

.statusbar input::-webkit-slider-thumb {
  appearance: none;
  width: 5px;
  height: 14px;
  background: #aaa;
}

.key {
  margin-left: 19px;
  color: #aaa;
}

.key:nth-of-type(3) {
  margin-left: 12px;
}

/* taskbar */
.taskbar {
  flex: none;
  display: flex;
  height: 40px;
  background: linear-gradient(90deg, #d3e2ea, #d5e6ea 50%, #cfdfe6);
  color: #111;
}

.taskbar > button {
  width: 49px;
}

.taskbar > button:first-child {
  width: 48px;
}

.taskbar .run {
  background: linear-gradient(#0078d7, #0078d7) 50% 100% / 40px 2px no-repeat;
}

.taskbar .alert {
  background: #f3d0b5;
  border-bottom: 2px solid #ff7300;
}

.taskbar .current {
  background: #eef4f8;
  border-bottom: 2px solid #0078d7;
  color: #2323e0;
}

.tray {
  display: flex;
  align-items: center;
  gap: 9px;
  margin-left: auto;
  padding-right: 4px;
}

.battery {
  width: 49px;
  height: 20px;
  border: 2px solid #fff;
  background: linear-gradient(90deg, #189a4a 58%, #000 58%);
  color: #fff;
  font-size: 14px;
  line-height: 16px;
  text-align: center;
}

.ime {
  font-size: 14px;
  color: #555;
}

.clock {
  display: flex;
  flex-direction: column;
  gap: 3px;
  width: 72px;
  text-align: center;
}

.action {
  width: 41px;
  height: 40px;
  border-right: 1px solid #9fb0b8;
}
```
